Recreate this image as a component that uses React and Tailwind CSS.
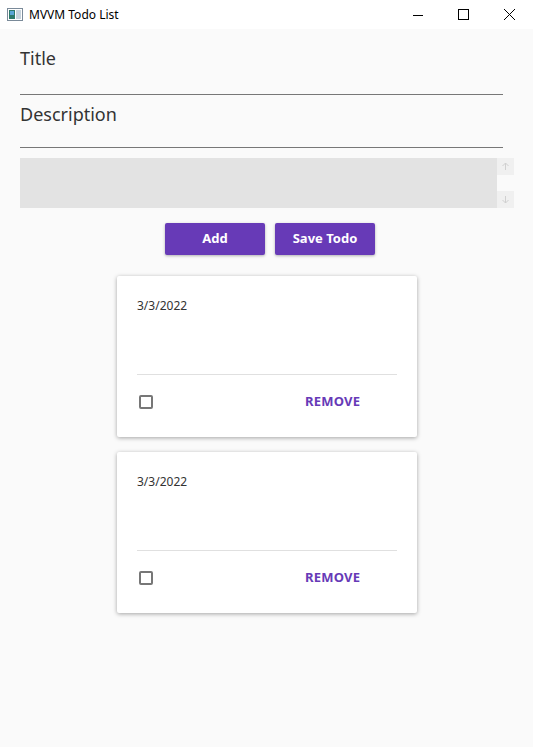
import React from "react";

function Card() {
  return (
    <div className="w-[300px] h-[161px] bg-white rounded-[2px] shadow-[0_1px_4px_rgba(0,0,0,0.35)] px-[20px] flex flex-col">
      <div className="pt-[22px] text-[12px] text-[#333] h-[98px] leading-[16px]">3/3/2022</div>
      <div className="h-px bg-[#e0e0e0]"></div>
      <div className="flex items-center h-[54px] pb-[1px]">
        <div className="ml-[2px] w-[14px] h-[14px] border-2 border-[#777] rounded-[2px]"></div>
        <div className="ml-[152px] text-[13px] font-bold text-[#673ab7] tracking-[0.2px]">REMOVE</div>
      </div>
    </div>
  );
}

export default function App() {
  return (
    <div className="w-[533px] h-[747px] bg-[#fafafa] flex flex-col" style={{ fontFamily: '"Noto Sans", "Open Sans", sans-serif' }}>
      <div className="h-[29px] bg-white flex items-center shrink-0">
        <svg width="16" height="14" viewBox="0 0 16 14" className="ml-[7px]">
          <rect x="0.5" y="0.5" width="15" height="12" fill="#fff" stroke="#7a8a99" />
          <rect x="2" y="2" width="6" height="9" fill="#2e7a6b" />
          <rect x="3" y="3" width="4" height="4" fill="#5aa6d6" />
          <rect x="9" y="2" width="5" height="9" fill="#c7d3dc" />
        </svg>
        <span className="ml-[6px] text-[12px] text-black leading-none">MVVM Todo List</span>
        <div className="ml-auto flex items-center">
          <svg width="46" height="28" viewBox="0 0 46 28"><line x1="18" y1="14.5" x2="28" y2="14.5" stroke="#000" strokeWidth="1" /></svg>
          <svg width="46" height="28" viewBox="0 0 46 28"><rect x="17.5" y="8.5" width="10" height="10" fill="none" stroke="#000" strokeWidth="1" /></svg>
          <svg width="46" height="28" viewBox="0 0 46 28"><path d="M17 8 L28 19 M28 8 L17 19" stroke="#000" strokeWidth="1" /></svg>
        </div>
      </div>
      <div className="pl-[20px] pr-[19px] flex flex-col">
        <div className="h-[66px] w-[483px] border-b border-[#777] pt-[17px] text-[18px] leading-[24px] text-[#333]">Title</div>
        <div className="h-[53px] w-[483px] border-b border-[#777] pt-[7px] text-[18px] leading-[24px] text-[#333]">Description</div>
        <div className="mt-[10px] flex h-[50px]">
          <div className="w-[477px] bg-[#e3e3e3]"></div>
          <div className="w-[17px] flex flex-col justify-between">
            <div className="h-[17px] bg-[#f0f0f0] flex items-center justify-center">
              <svg width="9" height="9" viewBox="0 0 9 9"><path d="M4.5 8 V1 M1.5 4 L4.5 1 L7.5 4" stroke="#d0d0d0" fill="none" /></svg>
            </div>
            <div className="h-[17px] bg-[#f0f0f0] flex items-center justify-center">
              <svg width="9" height="9" viewBox="0 0 9 9"><path d="M4.5 1 V8 M1.5 5 L4.5 8 L7.5 5" stroke="#d0d0d0" fill="none" /></svg>
            </div>
          </div>
        </div>
      </div>
      <div className="mt-[15px] flex justify-center gap-[10px] pl-[7px]">
        <button className="w-[100px] h-[32px] bg-[#673ab7] text-white text-[13px] font-bold rounded-[2px] shadow-[0_1px_3px_rgba(0,0,0,0.3)]">Add</button>
        <button className="w-[100px] h-[32px] bg-[#673ab7] text-white text-[13px] font-bold rounded-[2px] shadow-[0_1px_3px_rgba(0,0,0,0.3)]">Save Todo</button>
      </div>
      <div className="mt-[21px] flex flex-col items-center gap-[15px] pl-[1px]">
        <Card />
        <Card />
      </div>
    </div>
  );
}
